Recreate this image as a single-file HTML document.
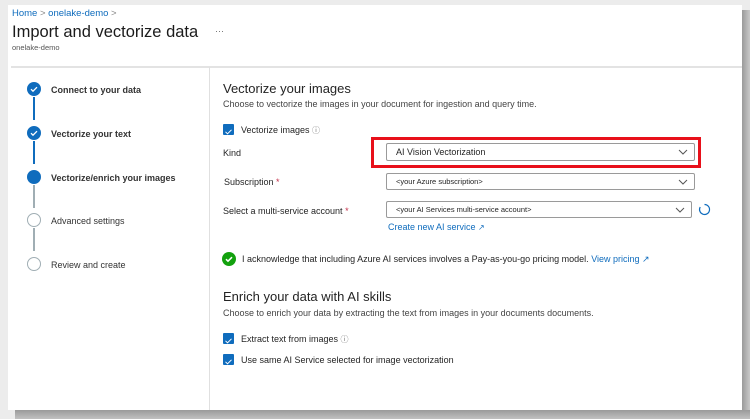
<!DOCTYPE html>
<html><head><meta charset="utf-8"><style>
*{margin:0;padding:0;box-sizing:border-box}
body{width:750px;height:419px;overflow:hidden;background:#ececec;font-family:"Liberation Sans",sans-serif;color:#242424;position:relative}
.bgr{position:absolute;left:742px;top:10px;width:8px;height:409px;background:linear-gradient(90deg,#9a9a9a,#c8c8c8)}
.bgb{position:absolute;left:15px;top:410px;width:735px;height:9px;background:linear-gradient(180deg,#9a9a9a,#c0c0c0)}
.card{position:absolute;left:8px;top:5px;width:734px;height:405px;background:#fff}
.a{position:absolute;white-space:nowrap}
.s{font-size:9px}
.blue{color:#0f6cbd}
.hr{position:absolute;left:3px;top:61px;width:731px;height:2px;background:#e3e3e3}
.vr{position:absolute;left:201px;top:62px;width:1px;height:343px;background:#e0e0e0}
.c{position:absolute;width:14px;height:14px;border-radius:50%}
.done{background:#0f6cbd}
.todo{border:1.5px solid #a0aeb4;background:#fff}
.ln{position:absolute;left:25px;width:2px}
.lbl{font-size:9px;font-weight:bold;color:#333;left:43px}
.cb{position:absolute;width:11px;height:11px;background:#0f6cbd;border-radius:1px}
.dd{position:absolute;border:1px solid #9a9a9a;border-radius:2px;height:17px;background:#fff}
.dd span{position:absolute;left:9px;top:3px;font-size:7.5px}
.dd svg{position:absolute;right:6px;top:5px}
</style></head><body>
<div class="bgr"></div><div class="bgb"></div>
<div class="card">
<div class="a blue" style="left:4px;top:3px;font-size:9.5px">Home <span style="color:#888">&gt;</span> onelake-demo <span style="color:#888">&gt;</span></div>
<div class="a" style="left:4px;top:18px;font-size:16.5px;color:#1b1b1b">Import and vectorize data</div>
<div class="a" style="left:207px;top:21px;font-size:9px;color:#666">···</div>
<div class="a" style="left:4px;top:38px;font-size:7.5px;color:#555">onelake-demo</div>
<div class="hr"></div><div class="vr"></div>

<div class="ln" style="top:92px;height:23px;background:#0f6cbd"></div>
<div class="ln" style="top:136px;height:23px;background:#0f6cbd"></div>
<div class="ln" style="top:180px;height:23px;background:#a0aeb4"></div>
<div class="ln" style="top:223px;height:23px;background:#a0aeb4"></div>
<div class="c done" style="left:19px;top:77px"><svg width="14" height="14"><path d="M4 7.2l2 2 4-4" stroke="#fff" stroke-width="1.3" fill="none"/></svg></div>
<div class="c done" style="left:19px;top:121px"><svg width="14" height="14"><path d="M4 7.2l2 2 4-4" stroke="#fff" stroke-width="1.3" fill="none"/></svg></div>
<div class="c done" style="left:19px;top:165px"></div>
<div class="c todo" style="left:19px;top:208px"></div>
<div class="c todo" style="left:19px;top:252px"></div>
<div class="a lbl" style="top:80px">Connect to your data</div>
<div class="a lbl" style="top:124px">Vectorize your text</div>
<div class="a lbl" style="top:168px">Vectorize/enrich your images</div>
<div class="a lbl" style="top:211px;font-weight:normal">Advanced settings</div>
<div class="a lbl" style="top:255px;font-weight:normal">Review and create</div>

<div class="a" style="left:215px;top:76px;font-size:13px">Vectorize your images</div>
<div class="a s" style="left:215px;top:94px;color:#444">Choose to vectorize the images in your document for ingestion and query time.</div>
<div class="cb" style="left:215px;top:119px"><svg width="11" height="11"><path d="M2.5 5.8l2 2 4-4" stroke="#fff" stroke-width="1" fill="none"/></svg></div>
<div class="a s" style="left:233px;top:120px">Vectorize images <span style="color:#777;font-size:8px">ⓘ</span></div>
<div class="a s" style="left:215px;top:143px">Kind</div>
<div class="a" style="left:363px;top:132px;width:330px;height:31px;border:3px solid #e8101a"></div>
<div class="dd" style="left:378px;top:138px;width:309px;height:18px"><span style="font-size:9px;top:3px">AI Vision Vectorization</span><svg width="10" height="6"><path d="M1 1l4 4 4-4" stroke="#555" fill="none"/></svg></div>
<div class="a s" style="left:216px;top:172px">Subscription <span style="color:#c4314b">*</span></div>
<div class="dd" style="left:378px;top:168px;width:309px"><span>&lt;your Azure subscription&gt;</span><svg width="10" height="6"><path d="M1 1l4 4 4-4" stroke="#555" fill="none"/></svg></div>
<div class="a s" style="left:215px;top:201px">Select a multi-service account <span style="color:#c4314b">*</span></div>
<div class="dd" style="left:378px;top:196px;width:306px"><span>&lt;your AI Services multi-service account&gt;</span><svg width="10" height="6"><path d="M1 1l4 4 4-4" stroke="#555" fill="none"/></svg></div>
<svg class="a" style="left:690px;top:198px" width="13" height="13"><path d="M6.5 1.5A5 5 0 1 1 2.2 4" stroke="#0f6cbd" stroke-width="1.2" fill="none"/></svg>
<div class="a s blue" style="left:380px;top:217px">Create new AI service <span style="font-size:8px">↗</span></div>
<div class="c" style="left:214px;top:247px;background:#13a10e"><svg width="14" height="14"><path d="M4 7.2l2 2 4-4" stroke="#fff" stroke-width="1.5" fill="none"/></svg></div>
<div class="a s" style="left:234px;top:249px">I acknowledge that including Azure AI services involves a Pay-as-you-go pricing model. <span class="blue">View pricing ↗</span></div>

<div class="a" style="left:215px;top:284px;font-size:13px">Enrich your data with AI skills</div>
<div class="a s" style="left:215px;top:303px;color:#444">Choose to enrich your data by extracting the text from images in your documents documents.</div>
<div class="cb" style="left:215px;top:328px"><svg width="11" height="11"><path d="M2.5 5.8l2 2 4-4" stroke="#fff" stroke-width="1" fill="none"/></svg></div>
<div class="a s" style="left:233px;top:329px">Extract text from images <span style="color:#777;font-size:8px">ⓘ</span></div>
<div class="cb" style="left:215px;top:349px"><svg width="11" height="11"><path d="M2.5 5.8l2 2 4-4" stroke="#fff" stroke-width="1" fill="none"/></svg></div>
<div class="a s" style="left:233px;top:350px">Use same AI Service selected for image vectorization</div>
</div>
</body></html>
